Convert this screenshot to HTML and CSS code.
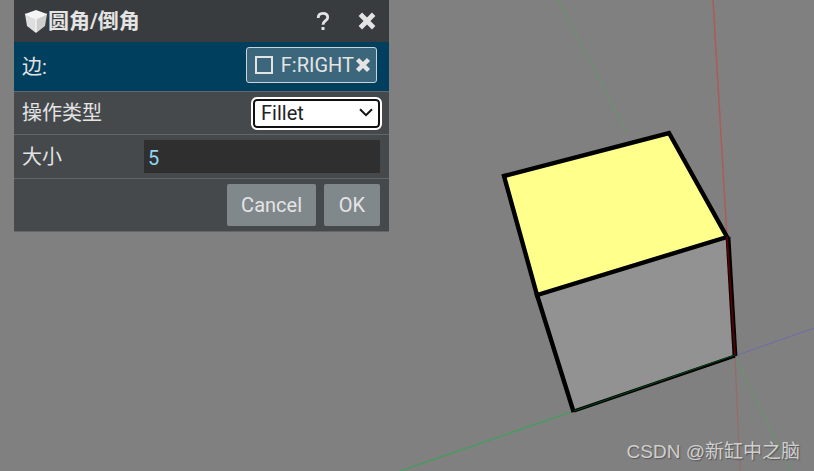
FILE: index.html
```html
<!DOCTYPE html>
<html lang="zh-CN">
<head>
<meta charset="utf-8">
<meta name="viewport" content="width=device-width, initial-scale=1">
<title>圆角/倒角</title>
<link rel="stylesheet" href="styles.css">
</head>
<body>
<main class="workspace">
  <svg class="scene" viewBox="0 0 814 471" preserveAspectRatio="xMaxYMin slice" aria-hidden="true">
    <path class="axis axis-y-far" d="M558 0 627 133M735 356 791 471"/>
    <path class="axis axis-z" d="M735 356 814 328"/>
    <path class="axis axis-x" d="M713 0 727 237"/>
    <path class="axis axis-x-far" d="M735 356 740 471"/>
    <path class="axis axis-y" d="M400 471 574 411"/>
    <path class="face-front" d="M537 295 727 237 735 356 573 411Z"/>
    <path class="face-top" d="M504 176 669 133 727 237 537 295Z"/>
    <path class="edge" d="M537 295 573 410"/>
    <path class="edge edge-side" d="M728 237 735 356"/>
    <path class="edge edge-bottom" d="M574 411 735 356"/>
    <path class="axis edge-x" d="M727 237 735 355"/>
    <path class="axis edge-y" d="M574 411 735 355"/>
  </svg>

  <form class="dialog" aria-labelledby="dialog-title">
    <header class="dialog-header">
      <svg class="cube-icon" viewBox="0 0 24 24" aria-hidden="true">
        <path fill="#f5f5f5" d="M12 1 23 5 12 10 1 5Z"/>
        <path fill="#dedede" d="M1 5 12 10V24L3 17Z"/>
        <path fill="#cecece" d="M23 5 12 10V24L21 17Z"/>
        <path fill="none" stroke="#fff" d="M1 5 12 10 23 5M12 10V23"/>
      </svg>
      <h1 class="dialog-title" id="dialog-title">圆角/倒角</h1>
      <button class="icon-button" type="button" aria-label="Help">
        <svg class="help-icon" viewBox="0 0 14 20" aria-hidden="true">
          <path fill="none" stroke="currentColor" stroke-width="2.8" d="M2.2 7C2.2 3.8 4.2 2.3 7 2.3C10 2.3 11.7 4 11.7 6.4C11.7 9.7 7 9.8 7 13.8"/>
          <path fill="currentColor" d="M5.5 16H8.5V19H5.5Z"/>
        </svg>
      </button>
      <button class="icon-button" type="button" aria-label="Close">
        <svg class="close-icon" viewBox="0 0 18 18" aria-hidden="true"><path d="M3 3 15 15M15 3 3 15"/></svg>
      </button>
    </header>

    <div class="row row-active">
      <span class="label">边:</span>
      <div class="chip">
        <svg class="face-icon" viewBox="0 0 18 18" aria-hidden="true"><rect x="1" y="1" width="16" height="16"/></svg>
        <span class="chip-text">F:RIGHT</span>
        <button class="chip-remove" type="button" aria-label="Remove F:RIGHT">
          <svg class="remove-icon" viewBox="0 0 16 16" aria-hidden="true"><path d="M2.5 2.5 13.5 13.5M13.5 2.5 2.5 13.5"/></svg>
        </button>
      </div>
    </div>

    <div class="row row-type">
      <label class="label" for="operation">操作类型</label>
      <div class="select-wrap">
        <select class="select" id="operation"><option>Fillet</option><option>Chamfer</option></select>
        <svg class="chevron" viewBox="0 0 14 9" aria-hidden="true"><path d="M1 1.2 7 7.2 13 1.2"/></svg>
      </div>
    </div>

    <div class="row row-size">
      <label class="label" for="size">大小</label>
      <input class="input" id="size" type="text" value="5">
    </div>

    <footer class="dialog-footer">
      <button class="button" type="button">Cancel</button>
      <button class="button" type="submit">OK</button>
    </footer>
  </form>

  <p class="watermark">CSDN @新缸中之脑</p>
</main>
</body>
</html>
```
FILE: styles.css
```css
* {
  box-sizing: border-box;
}

body {
  margin: 0;
  background: #808080;
  color: #e4e4e4;
  font: 20px/24px Roboto, "Noto Sans CJK SC", sans-serif;
}

button,
input,
select {
  margin: 0;
  font: inherit;
}

.workspace {
  position: relative;
  display: flex;
  flex-direction: column;
  justify-content: space-between;
  min-height: 100vh;
  padding: 0 14px;
  overflow: hidden;
}

.scene {
  position: absolute;
  inset: 0;
  width: 100%;
  height: 100%;
}

.axis {
  fill: none;
  stroke-width: 1;
}

.axis-x { stroke: #a95c5c; stroke-width: 1.6; }
.axis-x-far { stroke: #966b6b; stroke-width: 1.3; }
.axis-y { stroke: #3f9f5c; stroke-width: 1.2; }
.axis-y-far { stroke: #6b926d; stroke-width: 1.2; }
.axis-z { stroke: #7070a0; stroke-width: 1.2; }
.face-front { fill: #929292; }

.face-top {
  fill: #ffff8b;
  stroke: #000;
  stroke-width: 4.4;
}

.edge {
  fill: none;
  stroke: #000;
  stroke-width: 4.4;
  stroke-linecap: square;
}

.edge-side { stroke-width: 4.8; stroke-linecap: butt; }
.edge-bottom { stroke-width: 3.4; stroke-linecap: butt; }
.edge-x { stroke: #590000; stroke-width: 1.8; }
.edge-y { stroke: #00491c; }

.dialog {
  position: relative;
  width: 100%;
  max-width: 375px;
  background: #45494c;
}

.dialog-header {
  display: flex;
  align-items: center;
  height: 42px;
  padding: 0 12px 0 10px;
  background: #393c3e;
}

.cube-icon {
  width: 24px;
  height: 24px;
}

.dialog-title {
  flex: 1;
  margin: 0;
  font-size: 21px;
  line-height: 24px;
  font-weight: 700;
}

.icon-button,
.chip-remove {
  display: flex;
  padding: 0;
  border: 0;
  background: none;
  color: inherit;
}

.icon-button + .icon-button {
  margin-left: 27px;
}

.help-icon {
  width: 14px;
  height: 20px;
}

.close-icon {
  width: 20px;
  height: 20px;
}

.close-icon path,
.remove-icon path {
  fill: none;
  stroke: currentColor;
  stroke-width: 4.4;
}

.row {
  display: flex;
  align-items: center;
  justify-content: space-between;
  padding: 5px 9px 5px 8px;
  border-bottom: 1px solid #62676a;
}

.row-active {
  height: 50px;
  padding-right: 12px;
  background: #003f5d;
}

.row-type {
  height: 43px;
  padding-right: 7px;
}

.row-size {
  height: 44px;
}

.chip {
  display: flex;
  align-items: center;
  height: 36px;
  margin-bottom: 3px;
  padding: 0 5px 0 8px;
  border: 1px solid #ccd2d8;
  border-radius: 3px;
  background: #3b667b;
}

.face-icon {
  width: 18px;
  height: 18px;
  margin-right: 8px;
  fill: none;
  stroke: #e4e4e4;
  stroke-width: 2;
}

.chip-remove {
  margin-left: 1px;
}

.remove-icon {
  width: 16px;
  height: 16px;
}

.select-wrap {
  position: relative;
  width: 131px;
}

.select {
  display: block;
  width: 100%;
  height: 33px;
  padding: 0 8px;
  border: 2px solid #fff;
  border-radius: 6px;
  outline: 0;
  background: #fff;
  box-shadow: inset 0 0 0 2px #101010;
  color: #222;
  appearance: none;
}

.chevron {
  position: absolute;
  top: 11px;
  right: 9px;
  width: 14px;
  height: 9px;
  fill: none;
  stroke: #111;
  stroke-width: 2;
  pointer-events: none;
}

.input {
  width: 236px;
  height: 33px;
  padding: 2px 4px 0;
  border: 0;
  background: #2f2f2f;
  color: #94d4f4;
}

.dialog-footer {
  display: flex;
  justify-content: flex-end;
  gap: 8px;
  padding: 5px 9px;
  border-bottom: 1px solid #62676a;
}

.button {
  min-width: 56px;
  height: 42px;
  padding: 0 14px;
  border: 0;
  border-radius: 2px;
  background: #80888c;
  color: #e4e4e4;
}

.watermark {
  position: relative;
  align-self: flex-end;
  margin: 0 0 7px;
  color: #cfcfcf;
  font: 19px/24px "Liberation Sans", "Noto Sans CJK SC", sans-serif;
  text-shadow: 1px 1px 1px #555;
}
```
